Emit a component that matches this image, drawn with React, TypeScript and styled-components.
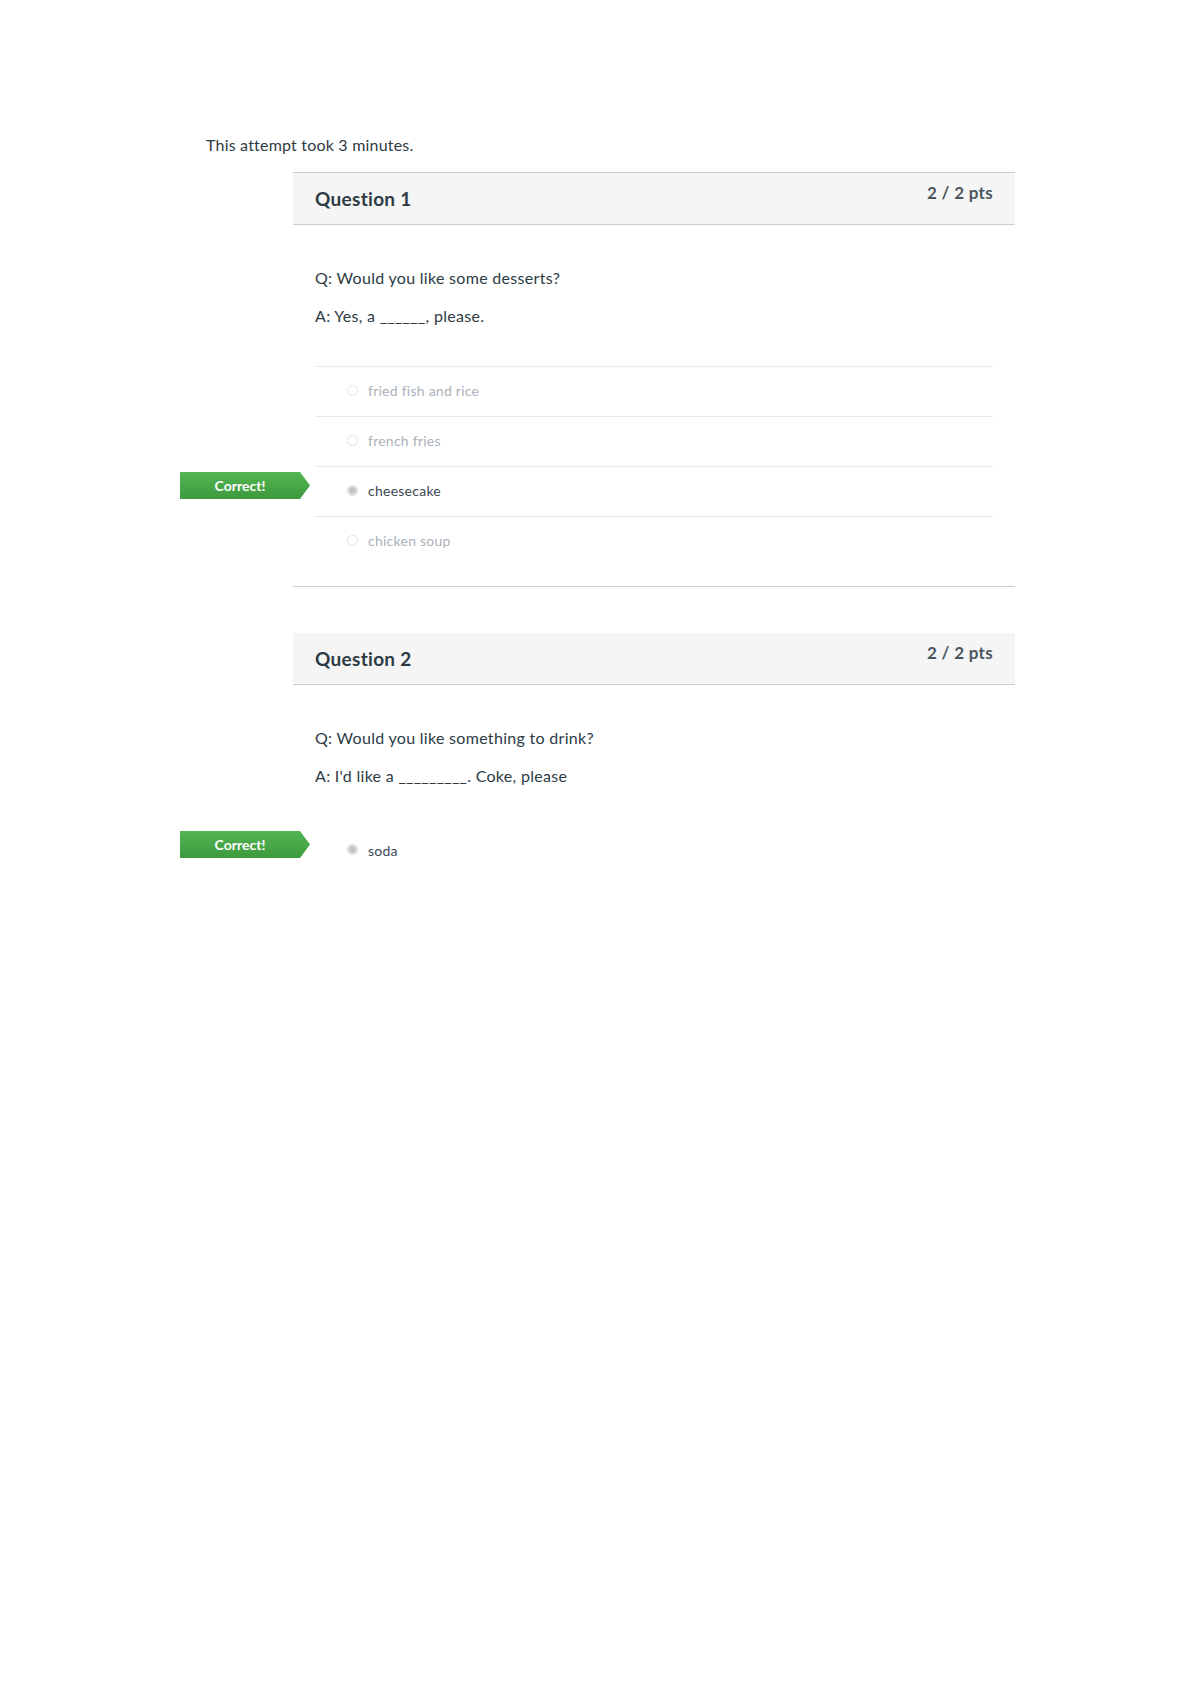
import React from 'react'
import styled, { createGlobalStyle } from 'styled-components'

const GlobalStyle = createGlobalStyle`
  html, body {
    margin: 0;
    padding: 0;
    background: #ffffff;
  }
  body {
    font-family: Lato, "Open Sans", "Liberation Sans", sans-serif;
    color: #2d3b45;
  }
`

const Page = styled.div`
  width: 1200px;
  min-height: 1698px;
  box-sizing: border-box;
  padding: 135px 0 0 206px;
`

const Summary = styled.div`
  font-size: 16px;
  line-height: 20px;
  letter-spacing: 0.2px;
  color: #2d3b45;
  margin-bottom: 17px;
`

const Card = styled.section<{ $topRule?: boolean; $bottomRule?: boolean }>`
  width: 722px;
  margin-left: 87px;
  margin-bottom: 46px;
  border-top: ${p => (p.$topRule ? '1px solid #c7cdd1' : 'none')};
  border-bottom: ${p => (p.$bottomRule ? '1px solid #c7cdd1' : 'none')};
`

const Header = styled.header`
  display: flex;
  justify-content: space-between;
  align-items: center;
  height: 51px;
  padding: 0 22px;
  background: #f5f5f5;
  border-bottom: 1px solid #c7cdd1;
`

const Title = styled.h2`
  margin: 0;
  font-size: 19px;
  font-weight: 700;
  line-height: 22px;
  letter-spacing: 0.3px;
  color: #2d3b45;
`

const Points = styled.span`
  align-self: flex-start;
  margin-top: 10px;
  font-size: 17px;
  font-weight: 700;
  line-height: 20px;
  letter-spacing: 0.3px;
  color: #4a555e;
`

const Body = styled.div<{ $bottomPad: number }>`
  padding: 42px 22px ${p => p.$bottomPad}px;
`

const Line = styled.p`
  margin: 0 0 16px;
  font-size: 16px;
  line-height: 22px;
  letter-spacing: 0.3px;
  color: #2d3b45;
  &:last-of-type {
    margin-bottom: 0;
  }
`

const Answers = styled.div`
  margin-top: 39px;
`

const Row = styled.div<{ $divider?: boolean }>`
  position: relative;
  display: flex;
  align-items: center;
  gap: 10px;
  height: 50px;
  box-sizing: border-box;
  padding: 0 0 1px 32px;
  border-top: ${p => (p.$divider ? '1px solid #e8eaec' : 'none')};
`

const Radio = styled.span<{ $checked?: boolean }>`
  width: 11px;
  height: 11px;
  box-sizing: border-box;
  border-radius: 50%;
  margin-top: -2px;
  border: 1px solid ${p => (p.$checked ? '#d6d6d6' : '#e3e3e3')};
  background: ${p => (p.$checked ? 'radial-gradient(circle, #c4c4c4 0 45%, #e6e6e6 60%)' : '#fff')};
`

const AnswerText = styled.span<{ $chosen?: boolean }>`
  font-size: 14px;
  line-height: 18px;
  letter-spacing: 0.25px;
  color: ${p => (p.$chosen ? '#3a4852' : '#aab2ba')};
`

const Badge = styled.div`
  position: absolute;
  left: -135px;
  top: 5px;
  width: 130px;
  height: 27px;
  padding-right: 10px;
  box-sizing: border-box;
  display: flex;
  align-items: center;
  justify-content: center;
  background: linear-gradient(#53b553, #3d9a3d);
  clip-path: polygon(0 0, 120px 0, 130px 50%, 120px 100%, 0 100%);
  color: #ffffff;
  font-size: 14px;
  font-weight: 700;
`

type Answer = { text: string; chosen?: boolean }

type Question = {
  title: string
  pts: string
  lines: string[]
  answers: Answer[]
  topRule?: boolean
  bottomRule?: boolean
  dividers: boolean
  bottomPad: number
}

const questions: Question[] = [
  {
    title: 'Question 1',
    pts: '2 / 2 pts',
    lines: ['Q: Would you like some desserts?', 'A: Yes, a ______, please.'],
    answers: [
      { text: 'fried fish and rice' },
      { text: 'french fries' },
      { text: 'cheesecake', chosen: true },
      { text: 'chicken soup' },
    ],
    topRule: true,
    bottomRule: true,
    dividers: true,
    bottomPad: 20,
  },
  {
    title: 'Question 2',
    pts: '2 / 2 pts',
    lines: ['Q: Would you like something to drink?', "A: I'd like a _________. Coke, please"],
    answers: [{ text: 'soda', chosen: true }],
    dividers: false,
    bottomPad: 0,
  },
]

const App: React.FC = () => {
  return (
    <>
      <GlobalStyle />
      <Page>
        <Summary>This attempt took 3 minutes.</Summary>
        {questions.map(q => (
          <Card key={q.title} $topRule={q.topRule} $bottomRule={q.bottomRule}>
            <Header>
              <Title>{q.title}</Title>
              <Points>{q.pts}</Points>
            </Header>
            <Body $bottomPad={q.bottomPad}>
              {q.lines.map(l => (
                <Line key={l}>{l}</Line>
              ))}
              <Answers>
                {q.answers.map(a => (
                  <Row key={a.text} $divider={q.dividers}>
                    {a.chosen && <Badge>Correct!</Badge>}
                    <Radio $checked={a.chosen} />
                    <AnswerText $chosen={a.chosen}>{a.text}</AnswerText>
                  </Row>
                ))}
              </Answers>
            </Body>
          </Card>
        ))}
      </Page>
    </>
  )
}

export default App
